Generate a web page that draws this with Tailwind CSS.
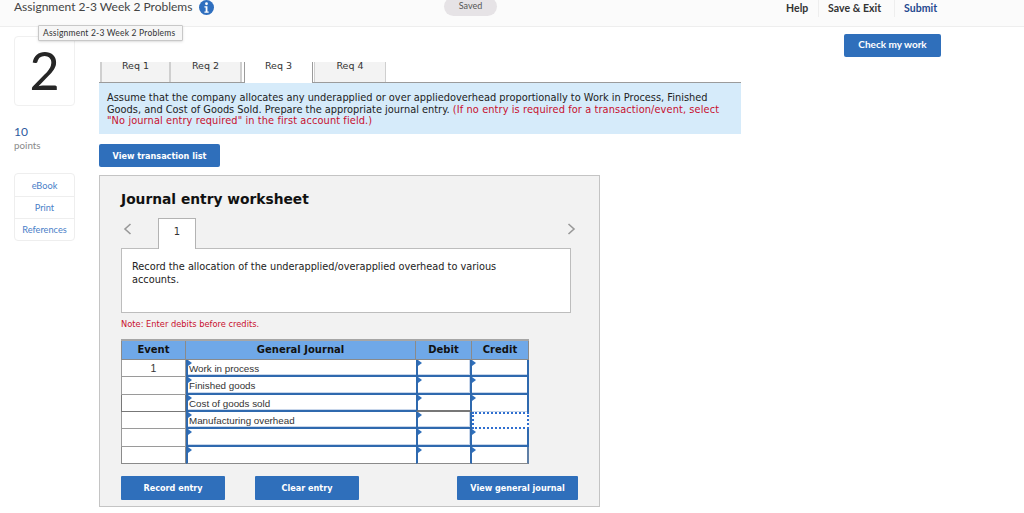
<!DOCTYPE html>
<html><head><meta charset="utf-8"><title>Assignment</title>
<script src="https://cdn.jsdelivr.net/npm/@tailwindcss/browser@4"></script></head>
<body class="bg-white">
<div class="relative w-[1024px] h-[513px] overflow-hidden flex flex-col font-['DejaVu_Sans',sans-serif]">
  <!-- header -->
  <header class="h-[27px] shrink-0 bg-[#fbfbfb] border-b border-[#eeeeee] flex items-start font-['Lato',sans-serif]">
    <div class="pl-[14px] w-[444px] flex items-center gap-[7px] h-[14px]">
      <span class="text-[12px] text-[#444] leading-[14px] whitespace-nowrap">Assignment 2-3 Week 2 Problems</span>
      <svg width="15" height="15" viewBox="0 0 16 16" class="shrink-0"><circle cx="8" cy="8" r="8" fill="#2f6fbf"/><circle cx="8" cy="4" r="1.5" fill="#fff"/><path d="M5.8 6.6h3.2v5.6h1.3v1.3H5.8v-1.3h1.3V7.9H5.8z" fill="#fff"/></svg>
    </div>
    <div class="w-[53px] h-[19px] -mt-[3px] rounded-full bg-[#e6e3e6] text-[9px] text-[#555] flex items-center justify-center pb-[1px]">Saved</div>
    <nav class="ml-[278px] flex items-start text-[10.5px] font-bold leading-[17px] whitespace-nowrap tracking-[0.05px]">
      <span class="w-[43px] pl-[11px] text-[#333]">Help</span>
      <span class="w-[76px] pl-[9px] border-l border-[#eee] text-[#333]">Save &amp; Exit</span>
      <span class="pl-[9px] border-l border-[#eee] text-[#24488f]">Submit</span>
    </nav>
  </header>
  <!-- tooltip -->
  <div class="absolute left-[38px] top-[25px] w-[145px] h-[16px] bg-[#f6f6f6] border border-[#c8c8c8] shadow-sm rounded-[1px] text-[8.5px] text-[#333] leading-[14px] pl-[4px] whitespace-nowrap font-['Lato','DejaVu_Sans',sans-serif] tracking-[0.2px]">Assignment 2-3 Week 2 Problems</div>
  <!-- body -->
  <div class="flex flex-1 min-h-0">
    <aside class="w-[99px] shrink-0 pl-[14px] pt-[9px] font-['Lato',sans-serif]">
      <div class="w-[61px] h-[70px] rounded-[4px] border border-[#f0f0f0] flex items-center justify-center pb-[2px] text-[52px] text-[#262626] leading-none">2</div>
      <div class="mt-[19px] text-[12px] leading-[14px] text-[#2d5a9e]">10</div>
      <div class="text-[9.8px] leading-[13px] text-[#8a8a8a]">points</div>
      <div class="mt-[21px] w-[61px] rounded-[4px] border border-[#eeeeee] text-[9.2px] text-[#4a80c8] text-center">
        <div class="h-[23px] leading-[23px] border-b border-[#eeeeee]">eBook</div>
        <div class="h-[22px] leading-[22px] border-b border-[#eeeeee]">Print</div>
        <div class="h-[21px] leading-[21px]">References</div>
      </div>
    </aside>
    <main class="w-[642px] shrink-0 pt-[35px]">
      <div class="flex h-[21px] border-b border-[#9b9b9b] pl-[1px] text-[9.5px] text-[#333] leading-[8px]">
        <div class="w-[71px] h-[20px] bg-[#f3f3f3] border-x-2 border-[#cfcfcf] text-center">Req 1</div>
        <div class="w-[71px] h-[20px] bg-[#f3f3f3] border-r-2 border-[#cfcfcf] text-center">Req 2</div>
        <div class="ml-[2px] w-[69px] h-[21px] bg-white border-x border-x-[#9b9b9b] text-center">Req 3</div>
        <div class="ml-[1px] w-[72px] h-[20px] bg-[#f3f3f3] border-x border-[#cfcfcf] text-center">Req 4</div>
      </div>
      <div class="h-[51px] bg-[#d6ebfa] pl-[8px] pt-[9px] text-[9.82px] leading-[11.7px] text-[#222]">
        Assume that the company allocates any underapplied or over appliedoverhead proportionally to Work in Process, Finished<br>Goods, and Cost of Goods Sold. Prepare the appropriate journal entry. <span class="text-[#c8102e] tracking-[0.1px]">(If no entry is required for a transaction/event, select<br>"No journal entry required" in the first account field.)</span>
      </div>
      <button class="mt-[10px] block w-[121px] h-[23px] pt-[1px] bg-[#2f6fbb] rounded-[2px] text-white text-[8.1px] font-bold">View transaction list</button>
      <section class="mt-[8px] w-[501px] h-[332px] bg-[#f2f2f2] border border-[#c4c4c4] pl-[21px] pr-[28px]">
        <h2 class="pt-[14px] text-[13.8px] font-bold leading-[18px] text-[#111]">Journal entry worksheet</h2>
        <div class="relative flex h-[30px] mt-[10px]">
          <svg width="9" height="12" viewBox="0 0 9 12" class="absolute left-[2px] top-[5px]"><path d="M7.5 1L2 6l5.5 5" fill="none" stroke="#999" stroke-width="1.6"/></svg>
          <div class="ml-[37px] w-[38px] h-[31px] bg-white border border-b-0 border-[#b3b3b3] z-10 text-center text-[10px] leading-[26px] text-[#333]">1</div>
          <svg width="9" height="12" viewBox="0 0 9 12" class="absolute left-[446px] top-[5px]"><path d="M1.5 1L7 6l-5.5 5" fill="none" stroke="#999" stroke-width="1.6"/></svg>
        </div>
        <div class="w-[450px] h-[65px] bg-white border border-[#bdbdbd] pl-[10px] pt-[11px] text-[9.75px] leading-[13px] text-[#222]">Record the allocation of the underapplied/overapplied overhead to various<br>accounts.</div>
        <p class="mt-[5px] text-[8.3px] leading-[12px] text-[#c8102e]">Note: Enter debits before credits.</p>
        <!-- table -->
        <div class="mt-[9px] w-[408px] text-[#111]">
          <div class="grid grid-cols-[65px_230px_56px_57px] h-[21px] bg-[#6fa8e8] border-t-2 border-[#a6a6a6] text-[10px] font-bold leading-[18px] text-center">
            <div class="border-x border-b-2 border-[#8a8a8a]">Event</div>
            <div class="border-r border-b-2 border-[#8a8a8a]">General Journal</div>
            <div class="border-r border-b-2 border-[#8a8a8a]">Debit</div>
            <div class="border-r border-b-2 border-[#8a8a8a]">Credit</div>
          </div>
          <div class="grid grid-cols-[65px_230px_56px_57px] auto-rows-[17.33px] font-['Liberation_Sans',sans-serif] text-[9.8px] leading-[17px] text-[#333]">
            <div class="bg-white border-x border-b border-[#9a9a9a] text-center text-[10.5px]">1</div>
            <div class="relative bg-white border-l-2 border-b-2 border-[#2f69ae] pl-[1px] overflow-hidden shadow-[inset_0_-1px_0_#c8d6ea]"><i class="absolute left-0 top-0 border-y-[3px] border-l-[4px] border-y-transparent border-l-[#2f6fbb]"></i>Work in process</div>
            <div class="relative bg-white border-x-2 border-b-2 border-[#2f69ae] shadow-[inset_-1px_-1px_0_#c8d6ea]"><i class="absolute left-0 top-0 border-y-[3px] border-l-[4px] border-y-transparent border-l-[#2f6fbb]"></i></div>
            <div class="relative bg-white border-r-2 border-b-2 border-[#2f69ae] shadow-[inset_0_-1px_0_#c8d6ea]"><i class="absolute left-0 top-0 border-y-[3px] border-l-[4px] border-y-transparent border-l-[#2f6fbb]"></i></div>

            <div class="bg-white border-x border-b border-[#9a9a9a]"></div>
            <div class="relative bg-white border-l-2 border-b-2 border-[#2f69ae] pl-[1px] overflow-hidden shadow-[inset_0_-1px_0_#c8d6ea]"><i class="absolute left-0 top-0 border-y-[3px] border-l-[4px] border-y-transparent border-l-[#2f6fbb]"></i>Finished goods</div>
            <div class="relative bg-white border-x-2 border-b-2 border-[#2f69ae] shadow-[inset_-1px_-1px_0_#c8d6ea]"><i class="absolute left-0 top-0 border-y-[3px] border-l-[4px] border-y-transparent border-l-[#2f6fbb]"></i></div>
            <div class="relative bg-white border-r-2 border-b-2 border-[#2f69ae] shadow-[inset_0_-1px_0_#c8d6ea]"><i class="absolute left-0 top-0 border-y-[3px] border-l-[4px] border-y-transparent border-l-[#2f6fbb]"></i></div>

            <div class="bg-white border-x border-b border-[#777]"></div>
            <div class="relative bg-white border-l-2 border-b-2 border-[#2f69ae] pl-[1px] overflow-hidden shadow-[inset_0_-1px_0_#c8d6ea]"><i class="absolute left-0 top-0 border-y-[3px] border-l-[4px] border-y-transparent border-l-[#2f6fbb]"></i>Cost of goods sold</div>
            <div class="relative bg-white border-x-2 border-b-2 border-[#2f69ae] border-b-[#777]"><i class="absolute left-0 top-0 border-y-[3px] border-l-[4px] border-y-transparent border-l-[#2f6fbb]"></i></div>
            <div class="relative bg-white border-r-2 border-[#2f69ae] shadow-[inset_0_-1px_0_#c8d6ea]"><i class="absolute left-0 top-0 border-y-[3px] border-l-[4px] border-y-transparent border-l-[#2f6fbb]"></i></div>

            <div class="bg-white border-x border-b border-[#9a9a9a]"></div>
            <div class="relative bg-white border-l-2 border-b-2 border-[#2f69ae] pl-[1px] overflow-hidden shadow-[inset_0_-1px_0_#c8d6ea]"><i class="absolute left-0 top-0 border-y-[3px] border-l-[4px] border-y-transparent border-l-[#2f6fbb]"></i>Manufacturing overhead</div>
            <div class="relative bg-white border-x-2 border-b-2 border-[#2f69ae] shadow-[inset_-1px_-1px_0_#c8d6ea]"><i class="absolute left-0 top-0 border-y-[3px] border-l-[4px] border-y-transparent border-l-[#2f6fbb]"></i></div>
            <div class="bg-white border-2 border-dotted border-[#2f6fd0]"></div>

            <div class="bg-white border-x border-b border-[#9a9a9a]"></div>
            <div class="relative bg-white border-l-2 border-b-2 border-[#2f69ae] shadow-[inset_0_-1px_0_#c8d6ea]"><i class="absolute left-0 top-0 border-y-[3px] border-l-[4px] border-y-transparent border-l-[#2f6fbb]"></i></div>
            <div class="relative bg-white border-x-2 border-b-2 border-[#2f69ae] shadow-[inset_-1px_-1px_0_#c8d6ea]"><i class="absolute left-0 top-0 border-y-[3px] border-l-[4px] border-y-transparent border-l-[#2f6fbb]"></i></div>
            <div class="relative bg-white border-r-2 border-b-2 border-[#2f69ae] shadow-[inset_0_-1px_0_#c8d6ea]"><i class="absolute left-0 top-0 border-y-[3px] border-l-[4px] border-y-transparent border-l-[#2f6fbb]"></i></div>

            <div class="bg-white border-x border-b border-[#8a8a8a]"></div>
            <div class="relative bg-white border-l-2 border-b border-[#2f69ae] border-b-[#8a8a8a]"><i class="absolute left-0 top-0 border-y-[3px] border-l-[4px] border-y-transparent border-l-[#2f6fbb]"></i></div>
            <div class="relative bg-white border-x-2 border-b border-[#2f69ae] border-b-[#8a8a8a]"><i class="absolute left-0 top-0 border-y-[3px] border-l-[4px] border-y-transparent border-l-[#2f6fbb]"></i></div>
            <div class="relative bg-white border-r-2 border-b border-[#5f7fa6] border-b-[#8a8a8a]"><i class="absolute left-0 top-0 border-y-[3px] border-l-[4px] border-y-transparent border-l-[#2f6fbb]"></i></div>
          </div>
        </div>
        <div class="mt-[12px] flex w-[457px] text-white text-[8.1px] font-bold">
          <button class="w-[104px] h-[24px] pt-[1px] bg-[#2f6fbb] rounded-[1px]">Record entry</button>
          <button class="ml-[30px] w-[104px] h-[24px] pt-[1px] bg-[#2f6fbb] rounded-[1px]">Clear entry</button>
          <button class="ml-auto w-[121px] h-[24px] pt-[1px] bg-[#2f6fbb] rounded-[1px]">View general journal</button>
        </div>
      </section>
    </main>
    <div class="ml-[103px] pt-[6px]">
      <button class="w-[97px] h-[23px] pb-[1px] bg-[#2f6fbb] rounded-[2px] text-white text-[10px] font-bold font-['Lato',sans-serif] relative -top-[2px]">Check my work</button>
    </div>
  </div>
</div>
</body></html>
